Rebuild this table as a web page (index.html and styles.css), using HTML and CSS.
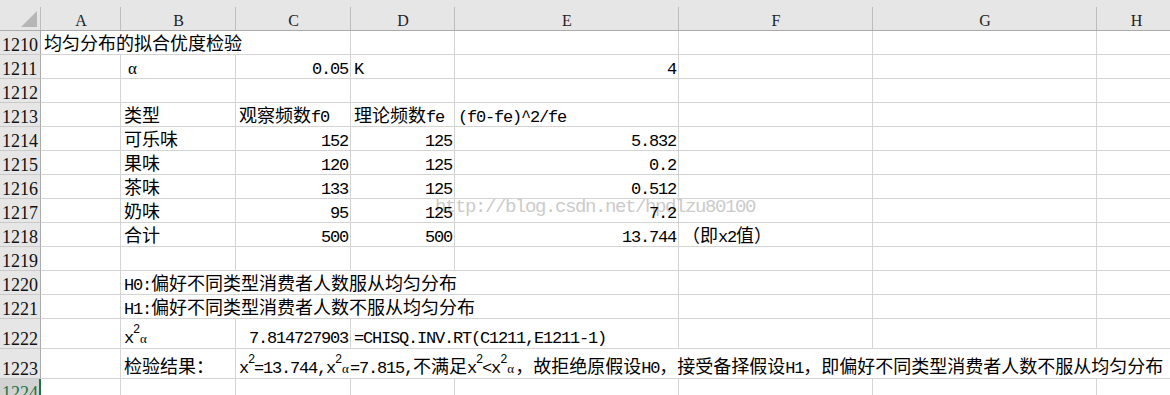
FILE: index.html
```html
<!DOCTYPE html>
<html lang="zh-CN">
<head>
<meta charset="utf-8">
<title>均匀分布的拟合优度检验</title>
<link rel="stylesheet" href="styles.css">
</head>
<body>
<div class="sheet">
  <div class="corner"><div class="tri"></div></div>
  <div class="ch">A</div><div class="ch">B</div><div class="ch">C</div><div class="ch">D</div><div class="ch">E</div><div class="ch">F</div><div class="ch">G</div><div class="ch">H</div>

  <div class="rh">1210</div>
  <div class="c s3">均匀分布的拟合优度检验</div><div class="c"></div><div class="c"></div><div class="c"></div><div class="c"></div><div class="c"></div>

  <div class="rh">1211</div>
  <div class="c"></div><div class="c"><span class="alpha">α</span></div><div class="c r"><span class="l">0.05</span></div><div class="c"><span class="l">K</span></div><div class="c r"><span class="l">4</span></div><div class="c"></div><div class="c"></div><div class="c"></div>

  <div class="rh">1212</div>
  <div class="c"></div><div class="c"></div><div class="c"></div><div class="c"></div><div class="c"></div><div class="c"></div><div class="c"></div><div class="c"></div>

  <div class="rh">1213</div>
  <div class="c"></div><div class="c">类型</div><div class="c">观察频数<span class="l">f0</span></div><div class="c">理论频数<span class="l">fe</span></div><div class="c"><span class="l">(f0-fe)^2/fe</span></div><div class="c"></div><div class="c"></div><div class="c"></div>

  <div class="rh">1214</div>
  <div class="c"></div><div class="c">可乐味</div><div class="c r"><span class="l">152</span></div><div class="c r"><span class="l">125</span></div><div class="c r"><span class="l">5.832</span></div><div class="c"></div><div class="c"></div><div class="c"></div>

  <div class="rh">1215</div>
  <div class="c"></div><div class="c">果味</div><div class="c r"><span class="l">120</span></div><div class="c r"><span class="l">125</span></div><div class="c r"><span class="l">0.2</span></div><div class="c"></div><div class="c"></div><div class="c"></div>

  <div class="rh">1216</div>
  <div class="c"></div><div class="c">茶味</div><div class="c r"><span class="l">133</span></div><div class="c r"><span class="l">125</span></div><div class="c r"><span class="l">0.512</span></div><div class="c"></div><div class="c"></div><div class="c"></div>

  <div class="rh">1217</div>
  <div class="c"></div><div class="c">奶味</div><div class="c r"><span class="l">95</span></div><div class="c r"><span class="l">125</span></div><div class="c r"><span class="l">7.2</span></div><div class="c"></div><div class="c"></div><div class="c"></div>

  <div class="rh">1218</div>
  <div class="c"></div><div class="c">合计</div><div class="c r"><span class="l">500</span></div><div class="c r"><span class="l">500</span></div><div class="c r"><span class="l">13.744</span></div><div class="c">（即<span class="l">x2</span>值）</div><div class="c"></div><div class="c"></div>

  <div class="rh">1219</div>
  <div class="c"></div><div class="c"></div><div class="c"></div><div class="c"></div><div class="c"></div><div class="c"></div><div class="c"></div><div class="c"></div>

  <div class="rh">1220</div>
  <div class="c"></div><div class="c s4"><span class="l">H0:</span>偏好不同类型消费者人数服从均匀分布</div><div class="c"></div><div class="c"></div><div class="c"></div>

  <div class="rh">1221</div>
  <div class="c"></div><div class="c s4"><span class="l">H1:</span>偏好不同类型消费者人数不服从均匀分布</div><div class="c"></div><div class="c"></div><div class="c"></div>

  <div class="rh tallh">1222</div>
  <div class="c tall"></div><div class="c tall"><span class="l">x</span><span class="sup">2</span><span class="sub">α</span></div><div class="c tall r"><span class="l">7.814727903</span></div><div class="c tall s2"><span class="l">=CHISQ.INV.RT(C1211,E1211-1)</span></div><div class="c tall"></div><div class="c tall"></div><div class="c tall"></div>

  <div class="rh tallh">1223</div>
  <div class="c tall"></div><div class="c tall">检验结果：</div><div class="c tall s6"><span class="l">x</span><span class="sup">2</span><span class="l">=13.744,x</span><span class="sup">2</span><span class="sub">α</span><span class="l">=7.815,</span>不满足<span class="l">x</span><span class="sup">2</span><span class="l">&lt;x</span><span class="sup">2</span><span class="sub">α</span>，故拒绝原假设<span class="l">H0</span>，接受备择假设<span class="l">H1</span>，即偏好不同类型消费者人数不服从均匀分布</div>

  <div class="rh sel">1224</div>
  <div class="c"></div><div class="c"></div><div class="c"></div><div class="c"></div><div class="c"></div><div class="c"></div><div class="c"></div><div class="c"></div>

  <div class="watermark">http://blog.csdn.net/hpdlzu80100</div>
</div>
</body>
</html>
```

FILE: styles.css
```css
* { box-sizing: border-box; }

html {
  margin: 0;
  padding: 0;
  background: #ffffff;
}

body {
  margin: 0;
  padding: 0;
  width: 1170px;
  height: 395px;
  overflow: hidden;
  font-family: "Noto Sans CJK SC", sans-serif;
  color: #000;
}

.sheet {
  position: relative;
  width: 1176px;
  display: grid;
  grid-template-columns: 41px 80px 115px 115px 104px 224px 194px 224px 79px;
  grid-template-rows: 31px repeat(12, 24px) 30px 30px 24px;
}

/* top-left select-all corner */
.corner {
  background: linear-gradient(#bdbdbd, #bdbdbd) no-repeat right 0 top 7px / 1px 100%, #e6e6e6;
  border-bottom: 1px solid #ababab;
  display: flex;
  justify-content: flex-end;
  align-items: flex-end;
  padding: 0 4px 3px 0;
}

.tri {
  width: 16px;
  height: 16px;
  background: #b6b6b6;
  clip-path: polygon(100% 0, 100% 100%, 0 100%);
}

/* column headers */
.ch {
  background: linear-gradient(#bdbdbd, #bdbdbd) no-repeat right 0 top 7px / 1px 100%, #e6e6e6;
  border-bottom: 1px solid #ababab;
  text-align: center;
  font-family: "Liberation Serif", serif;
  font-size: 16px;
  line-height: 16px;
  padding-top: 13px;
  color: #222;
}

/* row headers */
.rh {
  background: #e6e6e6;
  border-right: 1px solid #ababab;
  border-bottom: 1px solid #cacaca;
  font-family: "Liberation Serif", serif;
  font-size: 18px;
  line-height: 18px;
  padding: 5px 0 0 2px;
  color: #111;
}

.rh.tallh { padding-top: 11px; }

.rh.sel {
  background: #d2d2d2;
  color: #217346;
  border-right: 2px solid #217346;
}

/* cells */
.c {
  border-right: 1px solid #d4d4d4;
  border-bottom: 1px solid #d4d4d4;
  font-size: 18px;
  line-height: 18px;
  padding: 2px 2px 3px 3px;
  white-space: nowrap;
}

.c.tall { padding-top: 7px; padding-bottom: 4px; }

.r { text-align: right; }

.s2 { grid-column: span 2; }
.s3 { grid-column: span 3; }
.s4 { grid-column: span 4; }
.s6 { grid-column: span 6; }

/* half-width latin run */
.l {
  font-family: "Liberation Mono", monospace;
  font-size: 17px;
  letter-spacing: -1.2px;
  line-height: 0;
}

.sup {
  font-family: "Liberation Mono", monospace;
  font-size: 12px;
  letter-spacing: -1.2px;
  line-height: 0;
  vertical-align: 10px;
}

.sub {
  display: inline-block;
  width: 9px;
  padding-left: 1px;
  font-family: "Liberation Serif", serif;
  font-size: 13px;
  line-height: 0;
}

.alpha {
  display: inline-block;
  padding-left: 4px;
  font-family: "Liberation Serif", serif;
  font-size: 17px;
  line-height: 0;
}

.watermark {
  position: absolute;
  left: 435px;
  top: 198px;
  z-index: -1;
  font-family: "Liberation Mono", monospace;
  font-size: 19px;
  line-height: 19px;
  letter-spacing: -1.4px;
  color: #cbcbcb;
  white-space: nowrap;
}
```
